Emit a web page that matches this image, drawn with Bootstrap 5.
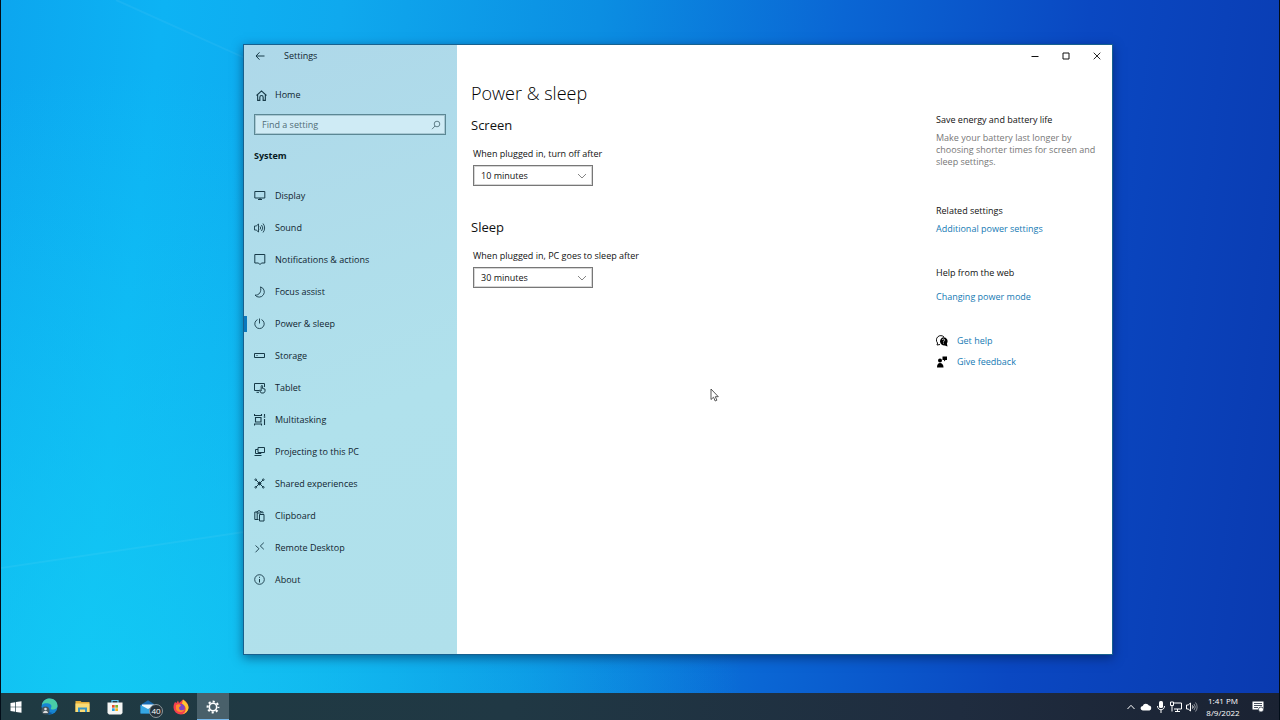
<!DOCTYPE html>
<html lang="en">
<head>
<meta charset="utf-8">
<meta name="viewport" content="width=device-width, initial-scale=1">
<title>Settings</title>
<link href="https://cdn.jsdelivr.net/npm/bootstrap@5.3.0/dist/css/bootstrap.min.css" rel="stylesheet">
<style>
  body {
    font-family: "Open Sans", "Noto Sans", sans-serif;
    font-size: 9px; line-height: 12px; color: #111;
    border-left: 1px solid #020d18; border-right: 1px solid #020d18;
    background: #0a8fe4;
  }
  svg { display: block; flex: none; }
  .ico { fill: none; stroke: currentColor; stroke-width: 1; }
  .plain { border: 0; background: none; padding: 0; color: inherit; }
  .desktop {
    position: relative;
    padding: 44px 166px 38px 242px;
    background:
      radial-gradient(ellipse 50% 90% at 8% 100%, rgba(20,208,244,.75), rgba(20,200,244,0)),
      linear-gradient(97deg, #0ca6ef 0%, #0db3f4 12%, #0fa9ee 25%, #0b8ee2 44%, #0a66d4 62%, #0a48c2 80%, #0a3ab0 100%);
  }
  .rays { position: absolute; inset: 0; width: 100%; height: 100%; }
  .win { position: relative; border: 1px solid #17618f; box-shadow: 0 3px 10px rgba(0,20,60,.5); background: #fff; }
  .side { width: 213px; background: linear-gradient(160deg, #aed8e9, #b0e1ec 60%, #b0e0eb); color: #102530; }
  .side .ico { color: #173a48; }
  .titlebar { height: 22px; }
  .back { width: 32px; height: 22px; }
  .home { height: 24px; margin-top: 16px; }
  .side a { color: inherit; text-decoration: none; }
  .side .nav-link { height: 32px; padding: 0 0 0 10px; gap: 9px; border-radius: 0; position: relative; }
  .side .nav-link.active::before { content: ""; position: absolute; left: 0; top: 8px; width: 3px; height: 16px; background: #0a78bd; }
  .find { margin: 7px 11px 0 10px; height: 21px; border: 1px solid #5b8794; background: #cfebf5; outline: 1px solid rgba(91,135,148,.35); outline-offset: -2px; }
  .find input { font-size: 9px; color: #36525c; padding: 0 7px; min-height: 0; background: none; }
  .find input::placeholder { color: #4f6d77; opacity: 1; }
  .find .ico { color: #45636d; stroke-width: .8; }
  .group { font-size: 9px; font-weight: 700; line-height: 12px; margin: 15px 10px 18px; color: #061a24; }
  .caption button { width: 31px; height: 22px; }
  .page { padding: 13px 0 0 14px; }
  .page h1 { font-size: 18px; line-height: 26px; font-weight: 300; margin: 0 0 10px; color: #000; }
  .page h2 { font-size: 13px; line-height: 18px; font-weight: 400; margin: 0; }
  .page section { margin-bottom: 32px; }
  .page label { display: block; margin: 14px 0 5px 2px; }
  .page .form-select {
    width: 120px; height: 21px; margin-left: 2px; padding: 0 20px 0 7px; font-size: 9px; line-height: 17px; color: #111;
    border: 1px solid #777; border-radius: 0; outline: 1px solid rgba(119,119,119,.3); outline-offset: -2px;
    background: #fff url("data:image/svg+xml,%3Csvg xmlns='http://www.w3.org/2000/svg' viewBox='0 0 10 10'%3E%3Cpath d='M1 3l4 4 4-4' fill='none' stroke='%23666' stroke-width='.8'/%3E%3C/svg%3E") right 5px center / 10px 10px no-repeat;
  }
  .aside { width: 176px; padding: 47px 14px 0 0; }
  .aside h3 { font-size: 9px; line-height: 12px; font-weight: 400; margin: 0; }
  .aside p { color: #777; margin: 6px 0 37px; }
  .aside a { color: #157ab4; text-decoration: none; }
  .related { margin-top: 6px; }
  .help { gap: 9px; }
  .help + .help { margin-top: 9px; }
  .taskbar { height: 27px; background: linear-gradient(90deg, #1f3a42, #203844 40%, #1f2c3f 75%, #1a2232); color: #fff; }
  .apps { gap: 3px; }
  .apps .app { width: 30px; height: 27px; }
  .apps .app.open { width: 32px; margin-left: -2px; background: #49606a; box-shadow: inset 0 -1px #76b9ed; }
  .count { position: absolute; left: 16px; top: 11px; width: 14px; height: 14px; border-radius: 50%; background: #26323a; border: 1px solid #8d989c; font-size: 8px; line-height: 12px; text-align: center; }
  .clock { font-size: 8px; line-height: 12px; width: 34px; white-space: nowrap; }
  .tray { gap: 4px; padding-right: 15px; }
  .note { margin-left: 8px; }
  .pointer { position: absolute; left: 709px; top: 388px; }
</style>
</head>
<body class="d-flex flex-column min-vh-100">
<main class="desktop d-flex flex-grow-1">
  <svg class="rays" viewBox="0 0 1278 693" preserveAspectRatio="none" fill="none" stroke="#fff"><path d="M115 0L275 72M0 568L243 532" stroke-opacity=".05" stroke-width="2"/></svg>
  <div class="win d-flex flex-grow-1">
    <aside class="side d-flex flex-column flex-shrink-0">
      <div class="titlebar d-flex align-items-center">
        <button class="plain back d-flex align-items-center justify-content-center" aria-label="Back"><svg class="ico" width="10" height="10" viewBox="0 0 10 10"><path d="M9.500 5H1M4.500 1.300L1 5l3.500 3.700"/></svg></button>
        <span class="ps-2">Settings</span>
      </div>
      <a href="#" class="home d-flex align-items-center ps-2"><svg class="ico ms-1 me-2" width="11" height="11" viewBox="0 0 10 10"><path d="M.5 5L5 .8 9.500 5M1.500 4.200v5.200h2V6.500a1.500 1.500 0 0 1 3 0v2.900h2V4.200"/></svg><span>Home</span></a>
      <div class="find d-flex align-items-center"><input class="form-control border-0 shadow-none" type="text" placeholder="Find a setting" aria-label="Find a setting"><svg class="ico me-1" width="10" height="10" viewBox="0 0 10 10"><circle cx="6" cy="4" r="2.800"/><path d="M4 6L1 9.200"/></svg></div>
      <h2 class="group">System</h2>
      <nav class="nav flex-column flex-nowrap">
        <a href="#" class="nav-link d-flex align-items-center"><svg class="ico" width="12" height="12" viewBox="0 0 12 12"><path d="M.8 1.500h10v6.500H.8zM4 9.500h4M6 8v1.500"/></svg>Display</a>
        <a href="#" class="nav-link d-flex align-items-center"><svg class="ico" width="12" height="12" viewBox="0 0 12 12"><path d="M.5 4h1.700L4.500 2v8L2.200 8H.5zM6 4.500a2.200 2.200 0 0 1 0 3M7.500 3a4.500 4.500 0 0 1 0 6M9 1.500a7 7 0 0 1 0 9" stroke-width=".9"/></svg>Sound</a>
        <a href="#" class="nav-link d-flex align-items-center"><svg class="ico" width="12" height="12" viewBox="0 0 12 12"><path d="M.8.500h10v8.500H7.500L6 10.600 4.500 9H.8z"/></svg>Notifications &amp; actions</a>
        <a href="#" class="nav-link d-flex align-items-center"><svg class="ico" width="12" height="12" viewBox="0 0 12 12"><path d="M6.500.9a5.200 5.200 0 1 1-5.500 8.200C5.200 9.500 7.700 5.800 6.500.9z" stroke-width=".9"/></svg>Focus assist</a>
        <a href="#" class="nav-link active d-flex align-items-center" aria-current="page"><svg class="ico" width="12" height="12" viewBox="0 0 12 12"><path d="M5.500.5v5M3.500 1.600a4.700 4.700 0 1 0 4 0" stroke-width=".9"/></svg>Power &amp; sleep</a>
        <a href="#" class="nav-link d-flex align-items-center"><svg class="ico" width="12" height="12" viewBox="0 0 12 12"><path d="M.5 3.500h10v4H.5zM2.500 5.500h1"/></svg>Storage</a>
        <a href="#" class="nav-link d-flex align-items-center"><svg class="ico" width="12" height="12" viewBox="0 0 12 12"><path d="M5 8.500H.5V1.500h10V5M2.500 10.300H5M7.200 7.500V4.200a.7.700 0 0 1 1.400 0V6.500l2.400.6v2.200L9.800 11H7.200L5.400 8.300c.6-.6 1-.3 1.800.6z"/></svg>Tablet</a>
        <a href="#" class="nav-link d-flex align-items-center"><svg class="ico" width="12" height="12" viewBox="0 0 12 12"><path d="M1.500 3.500h5.500v4.500H1.500zM.5 1.500h7.500M.5 0v2M7.500 0v2M.5 10h7.500M.5 9.500v2M7.500 9.500v2M10.500 0v2M10.500 5v6" stroke-width="1.100"/><path d="M9.800 3h1.400" stroke-width="1.500"/></svg>Multitasking</a>
        <a href="#" class="nav-link d-flex align-items-center"><svg class="ico" width="12" height="12" viewBox="0 0 12 12"><path d="M4 1.500h6.500v5H4zM4 3.500H1.500v4h5.500V6.500M.5 9.500h7"/></svg>Projecting to this PC</a>
        <a href="#" class="nav-link d-flex align-items-center"><svg class="ico" width="12" height="12" viewBox="0 0 12 12"><path d="M2 2l7 7M9 2L2 9"/><circle cx="5.500" cy="5.500" r="1.400" fill="currentColor"/><circle cx="1.700" cy="1.700" r=".8"/><circle cx="9.300" cy="1.700" r=".8"/><circle cx="1.700" cy="9.300" r=".8"/><circle cx="9.300" cy="9.300" r=".8"/></svg>Shared experiences</a>
        <a href="#" class="nav-link d-flex align-items-center"><svg class="ico" width="12" height="12" viewBox="0 0 12 12"><path d="M4.500 9.500H.8V2H3M7.500 2h1.500v1.500M3 1.500h1a1 1 0 0 1 2 0H7.200V3H3zM5.500 4.500h4.500v6.500H5.500zM3.200 3v6.500"/></svg>Clipboard</a>
        <a href="#" class="nav-link d-flex align-items-center"><svg class="ico" width="12" height="12" viewBox="0 0 12 12"><path d="M1.500 3.500L5 6.700 1.500 10.300M9.800.7L6.300 4l3.500 3.300" stroke-width=".9"/></svg>Remote Desktop</a>
        <a href="#" class="nav-link d-flex align-items-center"><svg class="ico" width="12" height="12" viewBox="0 0 12 12"><circle cx="5.500" cy="5.500" r="4.800" stroke-width=".9"/><path d="M5.500 5v3.500M5.500 2.800v1"/></svg>About</a>
      </nav>
    </aside>
    <div class="flex-grow-1 d-flex flex-column">
      <div class="caption d-flex justify-content-end">
        <button class="plain d-flex align-items-center justify-content-center" aria-label="Minimize"><svg class="ico" width="8" height="8" viewBox="0 0 8 8"><path d="M.5 4.500h7"/></svg></button>
        <button class="plain d-flex align-items-center justify-content-center" aria-label="Maximize"><svg class="ico" width="8" height="8" viewBox="0 0 8 8"><path d="M1 1h6v6H1z"/></svg></button>
        <button class="plain d-flex align-items-center justify-content-center" aria-label="Close"><svg class="ico" width="8" height="8" viewBox="0 0 8 8"><path d="M.7.700l6.600 6.600M7.300.700L.7 7.300" stroke-width=".9"/></svg></button>
      </div>
      <div class="d-flex flex-grow-1">
        <div class="page flex-grow-1">
          <h1>Power &amp; sleep</h1>
          <section>
            <h2>Screen</h2>
            <label for="screen">When plugged in, turn off after</label>
            <select id="screen" class="form-select"><option>10 minutes</option><option>30 minutes</option></select>
          </section>
          <section>
            <h2>Sleep</h2>
            <label for="sleep">When plugged in, PC goes to sleep after</label>
            <select id="sleep" class="form-select"><option>30 minutes</option><option>10 minutes</option></select>
          </section>
        </div>
        <div class="aside flex-shrink-0">
          <h3>Save energy and battery life</h3>
          <p>Make your battery last longer by choosing shorter times for screen and sleep settings.</p>
          <h3>Related settings</h3>
          <a href="#" class="related d-block">Additional power settings</a>
          <h3 class="mt-4 pt-2 mb-2">Help from the web</h3>
          <a href="#" class="d-block pt-1">Changing power mode</a>
          <a href="#" class="help d-flex align-items-center mt-4 pt-2"><svg width="12" height="12" viewBox="0 0 12 12"><path d="M4 9.500L1 10l.6-2A4.300 4.300 0 1 1 8 2" fill="none" stroke="#111"/><path d="M7.500 2.200a4 4 0 0 1 3.400 6.200l.6 3-2.600-1A4.100 4.100 0 1 1 7.500 2.200z" fill="#000"/><path d="M6.300 5c.2-1.500 2.600-1.200 2.300.2-.2.700-1.100.7-1.100 1.600M7.500 7.600v1" fill="none" stroke="#fff" stroke-width=".8"/></svg><span>Get help</span></a>
          <a href="#" class="help d-flex align-items-center"><svg width="12" height="12" viewBox="0 0 12 12"><path d="M6.500.5h4.500v3.500H9.500L8 5.500V4H6.500z"/><circle cx="4" cy="4.400" r="2"/><path d="M1 11.500c0-3 1-4.500 3-4.500s3.500 1.500 3.500 4.500z"/></svg><span>Give feedback</span></a>
        </div>
      </div>
    </div>
  </div>
  <svg class="pointer" width="9" height="14" viewBox="0 0 9 14"><path d="M1 1v10.500l2.500-2.300L5.200 13l1.700-.8-1.600-3.500h3z" fill="#fff" stroke="#444" stroke-width=".9"/></svg>
</main>
<footer class="taskbar d-flex justify-content-between">
  <div class="apps d-flex">
    <button class="plain app d-flex align-items-center justify-content-center" aria-label="Start"><svg width="12" height="12" viewBox="0 0 12 12" fill="#fff"><path d="M.5 2l4.800-.8v4.500H.5zM6 1.100L11.500.3v5.400H6zM.5 6.300h4.800v4.500L.5 10zM6 6.300h5.500v5.400L6 10.900z"/></svg></button>
    <button class="plain app d-flex align-items-center justify-content-center" aria-label="Edge"><svg width="17" height="17" viewBox="0 0 17 17"><circle cx="8.500" cy="8.500" r="8" fill="#1686d4"/><path d="M.8 7C2 2 5.500.5 8.500.5c5 0 8 3.500 8 7 0 3-2.500 4-4.500 4s-2.500-.8-2-1.600C11 8.500 10.500 6 7.500 5.500S2 5.500.8 7z" fill="#49cda7"/><path d="M6 8.500c-1.500 4 2 7 6 6-3 2.500-8 2-9.500-1.500z" fill="#0c4f9c"/><circle cx="4.500" cy="12.500" r="4" fill="#46575f"/><circle cx="4.500" cy="11" r="1.300" fill="#ddd"/><path d="M2 15c.5-3 4.500-3 5 0z" fill="#ddd"/></svg></button>
    <button class="plain app d-flex align-items-center justify-content-center" aria-label="File Explorer"><svg width="15" height="13" viewBox="0 0 15 13"><path d="M.5 1h5l1 1h8v10H.5z" fill="#e5ae38"/><path d="M.5 3.500h14V12H.5z" fill="#f9dc76"/><path d="M3 7.500h9V12h-2V9.500H5V12H3z" fill="#3795c5"/></svg></button>
    <button class="plain app d-flex align-items-center justify-content-center" aria-label="Store"><svg width="16" height="16" viewBox="0 0 16 16"><path d="M5 4V1.500h6V4" fill="none" stroke="#5ec4ef" stroke-width="1.200"/><path d="M.5 3.500h15V14l-1.500 1.500H2L.5 14z" fill="#f5f6f4"/><path d="M5 6h2.700v2.700H5z" fill="#e4512b"/><path d="M8.300 6H11v2.700H8.300z" fill="#79b52b"/><path d="M5 9.300h2.700V12H5z" fill="#28a2df"/><path d="M8.300 9.300H11V12H8.300z" fill="#f5b51d"/></svg></button>
    <button class="plain app d-flex align-items-center justify-content-center position-relative" aria-label="Mail, 40 unread"><svg width="16" height="14" viewBox="0 0 16 14"><path d="M.5 5L8 .3 15.500 5v8.500H.5z" fill="#176bb2"/><path d="M2 4.500h12V8L8 10 2 8z" fill="#eef7fb"/><path d="M.5 5L8 9 15.500 5v8.500H.5z" fill="#35a7e3"/></svg><span class="count">40</span></button>
    <button class="plain app d-flex align-items-center justify-content-center" aria-label="Firefox"><svg width="16" height="16" viewBox="0 0 16 16"><path d="M2 3l1.500 1L5 1.500 6 4l4-3.500C13 2 15.500 5 15.500 8.500a7.500 7 0 0 1-15 0C.5 6 1 4.500 2 3z" fill="#f5404f"/><path d="M10 .5c3 2 5.500 5 5.500 8s-2.500 6-6 6.800c3-2 4-5 2.500-7.800L9 4.500z" fill="#ffc52f"/><circle cx="8" cy="8.800" r="3.700" fill="#7b46c5"/><path d="M3 6c2-1 4-1 5 .5L6 8.500c0 3 3 3.500 5.500 2C10 14 4 14 3 10z" fill="#ff8b2c"/></svg></button>
    <button class="plain app open d-flex align-items-center justify-content-center" aria-label="Settings"><svg width="14" height="14" viewBox="0 0 14 14" fill="none" stroke="#fff"><circle cx="7" cy="7" r="3.700" stroke-width="1.600"/><circle cx="7" cy="7" r="5.400" stroke-width="2" stroke-dasharray="2.120 2.120" stroke-dashoffset="1"/></svg></button>
  </div>
  <div class="tray d-flex align-items-center">
    <svg class="ico" width="10" height="8" viewBox="0 0 10 8"><path d="M1.500 6L5 2.300 8.500 6"/></svg>
    <svg width="12" height="10" viewBox="0 0 12 10" fill="#fff"><path d="M3 8.500a2.300 2.300 0 0 1-.3-4.600 3.400 3.400 0 0 1 6.200-.3A2.500 2.500 0 0 1 9.500 8.500z"/></svg>
    <svg width="10" height="12" viewBox="0 0 10 12"><rect x="3" y="0" width="4" height="7" rx="1.500" fill="#fff"/><path d="M1.500 5c0 5 7 5 7 0M5 9v3" fill="none" stroke="#fff"/></svg>
    <svg class="ico" width="12" height="12" viewBox="0 0 12 12"><path d="M4 2h7.500v6H4M7.500 8v2.500M5 10.500h5M.5 1v3.500h3V1zM2 4.500v6"/></svg>
    <svg class="ico" width="12" height="12" viewBox="0 0 12 12"><path d="M.5 4h1.700L4.500 2v8L2.200 8H.5zM6.500 4.500a2.200 2.200 0 0 1 0 3"/><path d="M8 3a4.500 4.500 0 0 1 0 6M9.500 1.500a7 7 0 0 1 0 9" opacity=".5"/></svg>
    <div class="clock text-center ms-1">1:41 PM<br>8/9/2022</div>
    <button class="plain note" aria-label="Notifications"><svg width="12" height="12" viewBox="0 0 12 12"><path d="M.5.500h11v8H9L7 11.500V8.500H.5z" fill="#fff"/><path d="M2 2.500h8M2 4.500h8M2 6.500h4" stroke="#1c2638" stroke-width=".8"/><circle cx="9" cy="8.500" r="2.500" fill="#fff" stroke="#1c2638" stroke-width=".7"/></svg></button>
  </div>
</footer>
<script src="https://cdn.jsdelivr.net/npm/bootstrap@5.3.0/dist/js/bootstrap.bundle.min.js"></script>
</body>
</html>
